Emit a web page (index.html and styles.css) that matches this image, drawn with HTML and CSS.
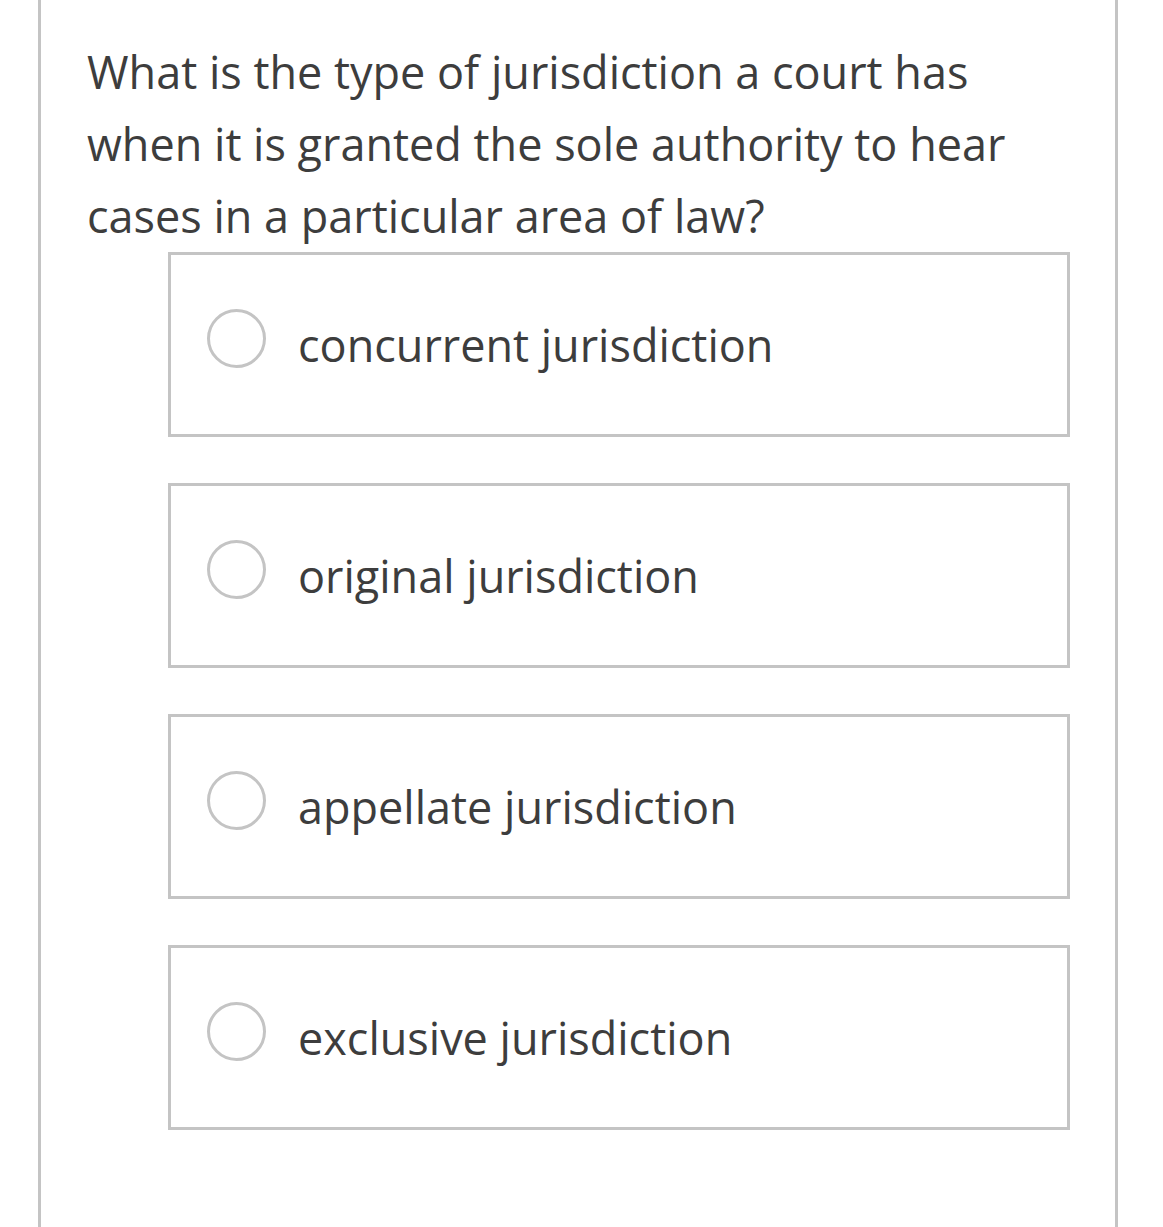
FILE: index.html
```html
<!DOCTYPE html>
<html>
<head>
    <link rel="stylesheet" href="styles.css">
</head>
<body>
    <div class="page">
        <p class="question">What is the type of jurisdiction a court has when it is granted the sole authority to hear cases in a particular area of law?</p>

        <div class="options">
            <label class="option">
                <span class="radio"></span>
                <span class="option-text">concurrent jurisdiction</span>
            </label>
            <label class="option">
                <span class="radio"></span>
                <span class="option-text">original jurisdiction</span>
            </label>
            <label class="option">
                <span class="radio"></span>
                <span class="option-text">appellate jurisdiction</span>
            </label>
            <label class="option">
                <span class="radio"></span>
                <span class="option-text">exclusive jurisdiction</span>
            </label>
        </div>
    </div>
</body>
</html>
```

FILE: styles.css
```css
html, body {
    margin: 0;
    height: 100%;
    background: #fff;
}

body {
    font-family: "Open Sans", sans-serif;
    color: #3d3d3d;
}

.page {
    box-sizing: border-box;
    margin-left: 38px;
    width: 1080px;
    min-height: 100%;
    border-left: 3px solid #c4c4c4;
    border-right: 3px solid #c4c4c4;
    padding: 36px 45px 0 46px;
}

.question {
    margin: 0;
    font-size: 45px;
    line-height: 72px;
    width: 950px;
}

.options {
    display: flex;
    flex-direction: column;
    gap: 46px;
    margin-left: 81px;
}

.option {
    box-sizing: border-box;
    height: 185px;
    border: 3px solid #c4c4c4;
    display: flex;
    align-items: center;
    padding-left: 36px;
}

.radio {
    box-sizing: border-box;
    width: 59px;
    height: 59px;
    margin-bottom: 12px;
    border: 3px solid #c4c4c4;
    border-radius: 50%;
    flex-shrink: 0;
}

.option-text {
    font-size: 45px;
    margin-left: 32px;
}
```
